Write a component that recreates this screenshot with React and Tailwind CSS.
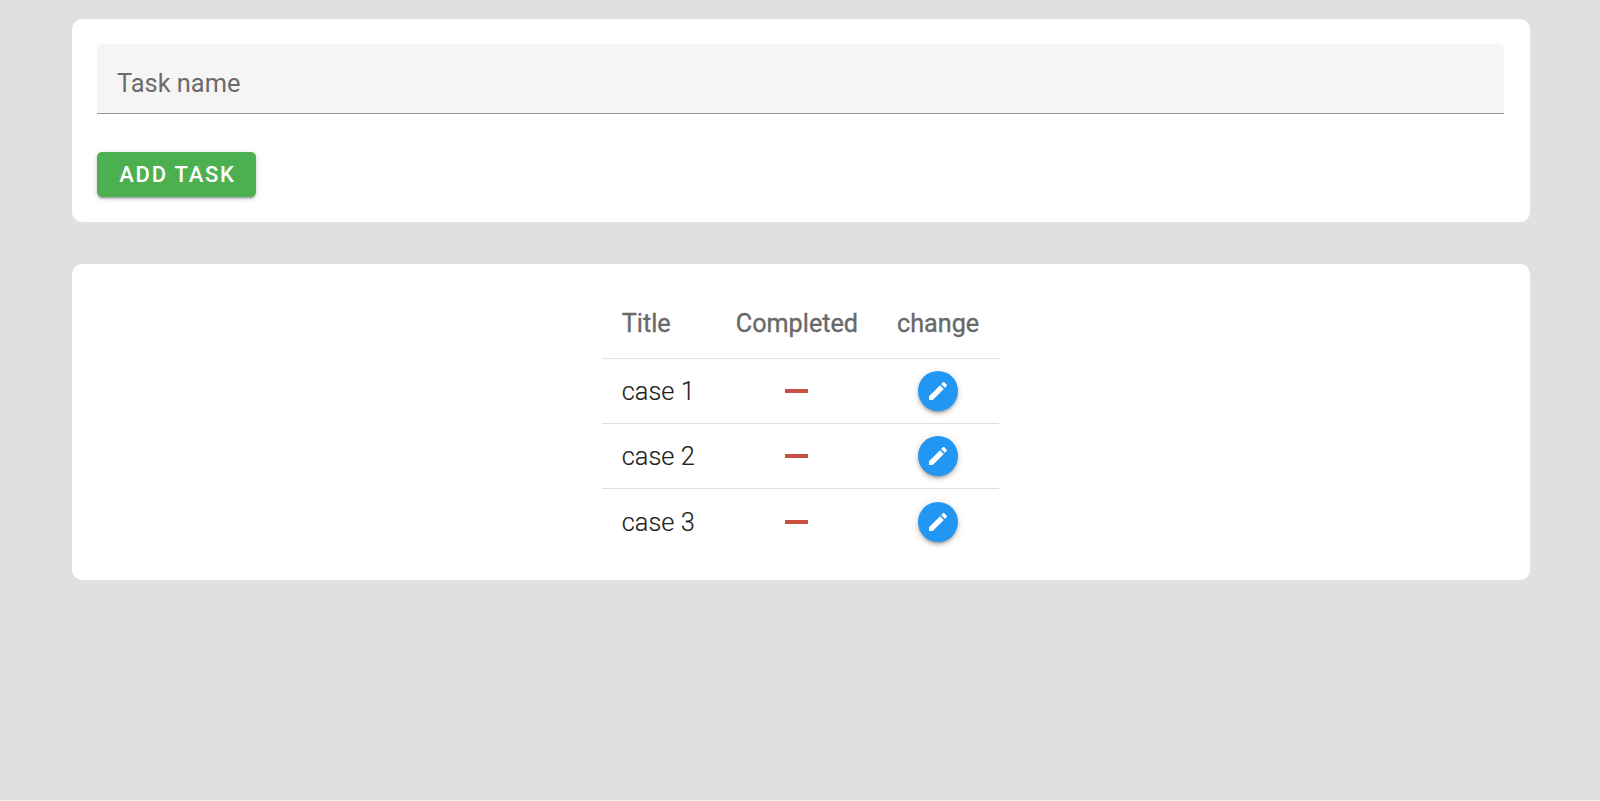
const rows = ["case 1", "case 2", "case 3"];

function Pencil() {
  return (
    <svg viewBox="0 0 24 24" className="w-6 h-6 fill-white">
      <path d="M20.71,7.04C21.1,6.65 21.1,6 20.71,5.63L18.37,3.29C18,2.9 17.35,2.9 16.96,3.29L15.12,5.12L18.87,8.87M3,17.25V21H6.75L17.81,9.93L14.06,6.18L3,17.25Z" />
    </svg>
  );
}

export default function App() {
  return (
    <div className="h-[801px] bg-[#f0f0f0] font-['Roboto',sans-serif] overflow-hidden">
      <div className="h-[800px] bg-[#e0e0e0] pl-[72px] pr-[70px] pt-[19px] flex flex-col gap-[42px]">
        <div className="bg-white rounded-[10px] pl-[25px] pr-[26px] py-[25px]">
          <div className="h-[70px] bg-[#f5f5f5] rounded-t-[5px] border-b border-[#949494] flex items-center pl-[20px] pt-[10px] text-[25.4px] text-[#6b6b6b]">
            Task name
          </div>
          <button className="mt-[38px] h-[45px] w-[159px] bg-[#4caf50] rounded-[5px] text-white text-[22px] font-medium tracking-[1.75px] flex items-center justify-center pl-[2px] shadow-[0_3px_2px_-2px_rgba(0,0,0,0.25),0_2px_3px_0_rgba(0,0,0,0.14),0_1px_6px_0_rgba(0,0,0,0.12)]">
            ADD TASK
          </button>
        </div>
        <div className="bg-white rounded-[10px] pl-[25px] pr-[26px] py-[25px] flex justify-center">
          <table className="border-collapse">
            <thead>
              <tr className="h-[69px] border-b border-[#e0e0e0] text-[25.2px] text-[#696969] [-webkit-text-stroke:0.35px_#696969]">
                <th className="pl-5 pr-[21px] pt-[2px] text-left font-normal">Title</th>
                <th className="pl-5 pr-[19px] pt-[2px] text-center font-normal">Completed</th>
                <th className="px-5 pt-[2px] text-center font-normal">change</th>
              </tr>
            </thead>
            <tbody>
              {rows.map((r, i) => (
                <tr key={r} className={i < 2 ? "h-[65px] border-b border-[#e0e0e0]" : "h-[67px]"}>
                  <td className={i < 2 ? "pl-5 pr-[21px] pt-[2px] text-[25.4px] text-[#212121] font-light [-webkit-text-stroke:0.15px_#212121]" : "pl-5 pr-[21px] text-[25.4px] text-[#212121] font-light [-webkit-text-stroke:0.15px_#212121]"}>{r}</td>
                  <td className="pl-5 pr-[19px]">
                    <div className="flex justify-center">
                      <svg viewBox="0 0 23 4" className="w-[23px] h-[4px] fill-[#c94f43]">
                        <rect width="23" height="4" />
                      </svg>
                    </div>
                  </td>
                  <td className="px-5">
                    <div className="flex justify-center">
                      <button className="w-10 h-10 rounded-full bg-[#2196f3] flex items-center justify-center shadow-[0_3px_3px_-2px_rgba(0,0,0,0.3),0_3px_4px_0_rgba(0,0,0,0.14),0_1px_8px_0_rgba(0,0,0,0.12)]">
                        <Pencil />
                      </button>
                    </div>
                  </td>
                </tr>
              ))}
            </tbody>
          </table>
        </div>
      </div>
    </div>
  );
}
